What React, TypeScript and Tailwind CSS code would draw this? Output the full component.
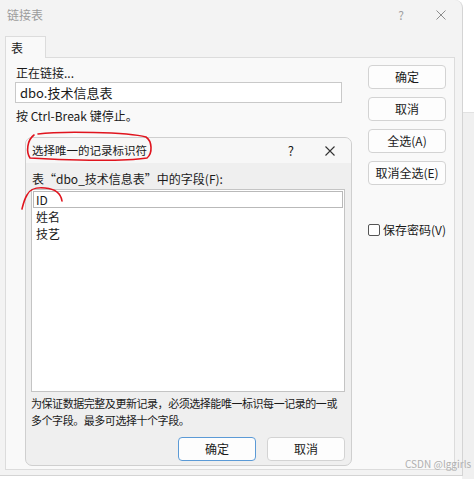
export default function App() {
  return (
    <div
      className="relative h-[479px] w-[474px] overflow-hidden bg-white text-[12px] text-[#1a1a1a]"
      style={{ fontFamily: '"Noto Sans CJK SC", "Noto Sans", sans-serif' }}
    >
      {/* background strip to the right of the window */}
      <div className="absolute right-0 top-[112px] h-[367px] w-[12px] border-t border-[#e2e2e2] bg-[#f0f0f0]" />

      {/* main window */}
      <div className="relative h-[476px] w-[463px] rounded-tr-[8px] border-r border-b border-[#d4d4d4] bg-[#f3f3f3]">
        {/* title bar */}
        <div className="flex h-[36px] items-start pt-[6px]">
          <span className="ml-[7px] leading-[18px] text-[#9c9c9c]">链接表</span>
          <span className="ml-auto mr-[32px] leading-[18px] text-[#a0a0a0]">?</span>
          <svg className="mr-[16px] mt-[4px]" width="10" height="10" viewBox="0 0 10 10">
            <path d="M0.5 0.5L9.5 9.5M9.5 0.5L0.5 9.5" stroke="#8c8c8c" strokeWidth="1" />
          </svg>
        </div>

        <div className="px-[5px]">
          {/* tab */}
          <div className="relative z-10 -mb-px flex h-[22px] w-[41px] items-center border border-b-0 border-[#dcdcdc] bg-[#f9f9f9] pl-[5px]">
            表
          </div>

          {/* tab panel */}
          <div className="flex h-[413px] w-[450px] border border-[#dcdcdc] bg-[#f9f9f9]">
            {/* left column */}
            <div className="w-[346px]">
              <div className="pl-[10px] pt-[7px] leading-[16px]">正在链接...</div>
              <div className="ml-[9px] mt-[1px] flex h-[21px] w-[327px] items-center border border-[#c9c9c9] bg-white pl-[4px] text-[13px]">
                dbo.技术信息表
              </div>
              <div className="mt-[5px] pl-[10px] leading-[16px]">按 Ctrl-Break 键停止。</div>

              {/* inner dialog */}
              <div className="ml-[19px] mt-[13px] h-[329px] w-[327px] overflow-hidden rounded-[7px] border border-[#cfcfcf] bg-[#efefef]">
                <div className="flex h-[25px] items-center bg-[#f7f7f7]">
                  <span className="ml-[6px] text-[11.5px]">选择唯一的记录标识符</span>
                  <span className="ml-auto mr-[31px] text-[13px]">?</span>
                  <svg className="mr-[16px]" width="10" height="10" viewBox="0 0 10 10">
                    <path d="M0.5 0.5L9.5 9.5M9.5 0.5L0.5 9.5" stroke="#333" strokeWidth="1.1" />
                  </svg>
                </div>
                <div className="mt-[8px] pl-[6px] leading-[16px]">表“dbo_技术信息表”中的字段(F):</div>
                <div className="ml-[5px] mt-[2px] h-[203px] w-[314px] border border-[#c4c4c4] bg-white p-px">
                  <div className="flex h-[17px] items-center border border-[#b9b9b9] pl-[2px]">ID</div>
                  <div className="flex h-[17px] items-center pl-[3px]">姓名</div>
                  <div className="flex h-[17px] items-center pl-[3px]">技艺</div>
                </div>
                <div className="mt-[3px] whitespace-nowrap pl-[5px] text-[11px] leading-[17px] tracking-[-0.45px]">
                  为保证数据完整及更新记录，必须选择能唯一标识每一记录的一或
                  <br />
                  多个字段。最多可选择十个字段。
                </div>
                <div className="mt-[8px] flex justify-end gap-[11px] pr-[6px]">
                  <button className="h-[24px] w-[78px] rounded-[4px] border border-[#5b9ad6] bg-[#fdfdfd]">确定</button>
                  <button className="h-[24px] w-[78px] rounded-[4px] border border-[#d3d3d3] bg-[#fdfdfd]">取消</button>
                </div>
              </div>
            </div>

            {/* right column */}
            <div className="ml-[16px] flex w-[78px] flex-col pt-[7px]">
              <div className="flex flex-col gap-[8px]">
                <button className="h-[24px] rounded-[4px] border border-[#d3d3d3] bg-[#fdfdfd]">确定</button>
                <button className="h-[24px] rounded-[4px] border border-[#d3d3d3] bg-[#fdfdfd]">取消</button>
                <button className="h-[24px] rounded-[4px] border border-[#d3d3d3] bg-[#fdfdfd]">全选(A)</button>
                <button className="h-[24px] rounded-[4px] border border-[#d3d3d3] bg-[#fdfdfd]">取消全选(E)</button>
              </div>
              <label className="mt-[36px] flex items-center whitespace-nowrap">
                <span className="mr-[3px] h-[12px] w-[12px] rounded-[2px] border border-[#555] bg-white" />
                保存密码(V)
              </label>
            </div>
          </div>
        </div>
      </div>

      {/* red hand-drawn annotations */}
      <svg className="pointer-events-none absolute left-0 top-0" width="474" height="479" viewBox="0 0 474 479">
        <path
          d="M38 134 C60 131, 128 132, 146 137 C152 141, 153 153, 147 158 C120 162, 60 160, 30 158 C26 152, 27 140, 34 135"
          fill="none"
          stroke="#e0141e"
          strokeWidth="1.6"
          strokeLinecap="round"
        />
        <path
          d="M62 201 C61 194, 56 189, 45 188 C35 187, 30 189, 27 195 C24 200, 23 205, 22 209"
          fill="none"
          stroke="#e0141e"
          strokeWidth="1.6"
          strokeLinecap="round"
        />
      </svg>

      {/* watermark */}
      <div className="absolute left-[405px] top-[456px] text-[10px] text-[#b0b0b0]">CSDN @lggirls</div>
    </div>
  );
}
